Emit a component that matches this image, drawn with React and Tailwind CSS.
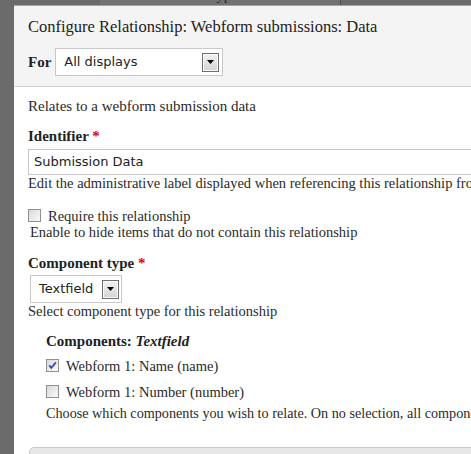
import React from "react";

const SANS = "font-['DejaVu_Sans',sans-serif]";

function SelectArrow() {
  return (
    <span className="flex h-[19px] w-[17px] shrink-0 items-center justify-center border border-[#707070] bg-gradient-to-b from-[#f2f2f2] to-[#d4d4d4] shadow-[inset_0_0_0_1px_#fafafa]">
      <svg width="7" height="4" viewBox="0 0 7 4">
        <path d="M0 0h7L3.5 4z" fill="#000" />
      </svg>
    </span>
  );
}

function Checkbox({ checked }) {
  return (
    <span className="mt-[1px] flex h-[13px] w-[13px] shrink-0 items-center justify-center border border-[#8f9090] bg-gradient-to-br from-[#d9d9d9] to-[#fafafa]">
      {checked && (
        <svg width="9" height="9" viewBox="0 0 9 9">
          <path d="M1.2 4.4l2.1 2.4L7.9 1.4" stroke="#2d4fb0" strokeWidth="1.8" fill="none" />
        </svg>
      )}
    </span>
  );
}

function Required() {
  return <span className="text-[#e30000]"> *</span>;
}

export default function App() {
  return (
    <div className="flex h-[454px] w-[471px] flex-col overflow-hidden bg-[#6b6b6b] font-['Liberation_Serif',serif] text-[#2a2a2a]">
      {/* page behind the dialog */}
      <div className="flex h-[5px] shrink-0 overflow-hidden">
        <div className="w-[100px] bg-[#6b6b6b]" />
        <div className="w-[241px] overflow-hidden border-r border-[#4f4f4f] bg-[#727272] pl-[112px]">
          <span className="-mt-[12px] block text-[15px] leading-[15px] text-[#1e2b50]">typ</span>
        </div>
        <div className="flex-1 bg-[#6b6b6b]" />
      </div>

      <div className="flex min-h-0 flex-1">
        <div className="w-[14px] shrink-0" />

        <div className="flex w-[580px] shrink-0 flex-col border-t border-[#a5a5a5] bg-white">
          {/* header */}
          <div className="border-b border-[#cfcfcf] bg-[#f4f4f4] pb-[10px] pl-[14px] pt-[11px]">
            <div className="text-[16.5px] leading-[20px] text-[#222]">
              Configure Relationship: Webform submissions: Data
            </div>
            <div className="mt-[11px] flex h-[28px] items-center gap-[4px]">
              <span className="text-[15px] font-bold text-[#222]">For</span>
              <div className={`flex h-[28px] w-[168px] items-center justify-between border border-[#c8c8c8] bg-white pl-[8px] pr-[3px] text-[13px] text-[#222] ${SANS}`}>
                <span>All displays</span>
                <SelectArrow />
              </div>
            </div>
          </div>

          {/* body */}
          <div className="pl-[14px] pt-[10px]">
            <p className="whitespace-nowrap text-[15px] leading-[18px]">Relates to a webform submission data</p>

            <p className="mt-[12px] text-[15px] font-bold leading-[18px] text-[#222]">
              Identifier<Required />
            </p>
            <div className={`mt-[4px] flex h-[26px] w-[520px] items-center border border-[#c8c8c8] bg-white pl-[5px] text-[13px] text-[#222] ${SANS}`}>
              Submission Data
            </div>
            <p className="whitespace-nowrap text-[14.5px] leading-[17px]">
              Edit the administrative label displayed when referencing this relationship from filters, etc.
            </p>

            <label className="mt-[16px] flex h-[16px] items-start gap-[7px]">
              <Checkbox />
              <span className="whitespace-nowrap text-[14.5px] leading-[16px]">Require this relationship</span>
            </label>
            <p className="whitespace-nowrap pl-[2px] text-[14.5px] leading-[17px]">
              Enable to hide items that do not contain this relationship
            </p>

            <p className="mt-[13px] text-[15px] font-bold leading-[18px] text-[#222]">
              Component type<Required />
            </p>
            <div className={`ml-[2px] mt-[3px] flex h-[28px] w-[92px] items-center justify-between border border-[#c8c8c8] bg-white pl-[8px] pr-[2px] text-[13px] text-[#222] ${SANS}`}>
              <span>Textfield</span>
              <SelectArrow />
            </div>
            <p className="whitespace-nowrap text-[14.5px] leading-[17px]">Select component type for this relationship</p>

            <div className="ml-[18px] mt-[12px]">
              <p className="text-[15px] font-bold leading-[18px] text-[#222]">
                Components: <em>Textfield</em>
              </p>
              <label className="mt-[8px] flex h-[16px] items-start gap-[7px]">
                <Checkbox checked />
                <span className="whitespace-nowrap text-[14.5px] leading-[16px]">Webform 1: Name (name)</span>
              </label>
              <label className="mt-[10px] flex h-[16px] items-start gap-[7px]">
                <Checkbox />
                <span className="whitespace-nowrap text-[14.5px] leading-[16px]">Webform 1: Number (number)</span>
              </label>
              <p className="mt-[5px] whitespace-nowrap text-[14.2px] leading-[17px]">
                Choose which components you wish to relate. On no selection, all components will be used.
              </p>
            </div>

            <div className="ml-[1px] mt-[25px] h-[40px] rounded-tl-[5px] border border-[#c9c9c9] bg-[#e6e6e6]" />
          </div>
        </div>
      </div>
    </div>
  );
}
